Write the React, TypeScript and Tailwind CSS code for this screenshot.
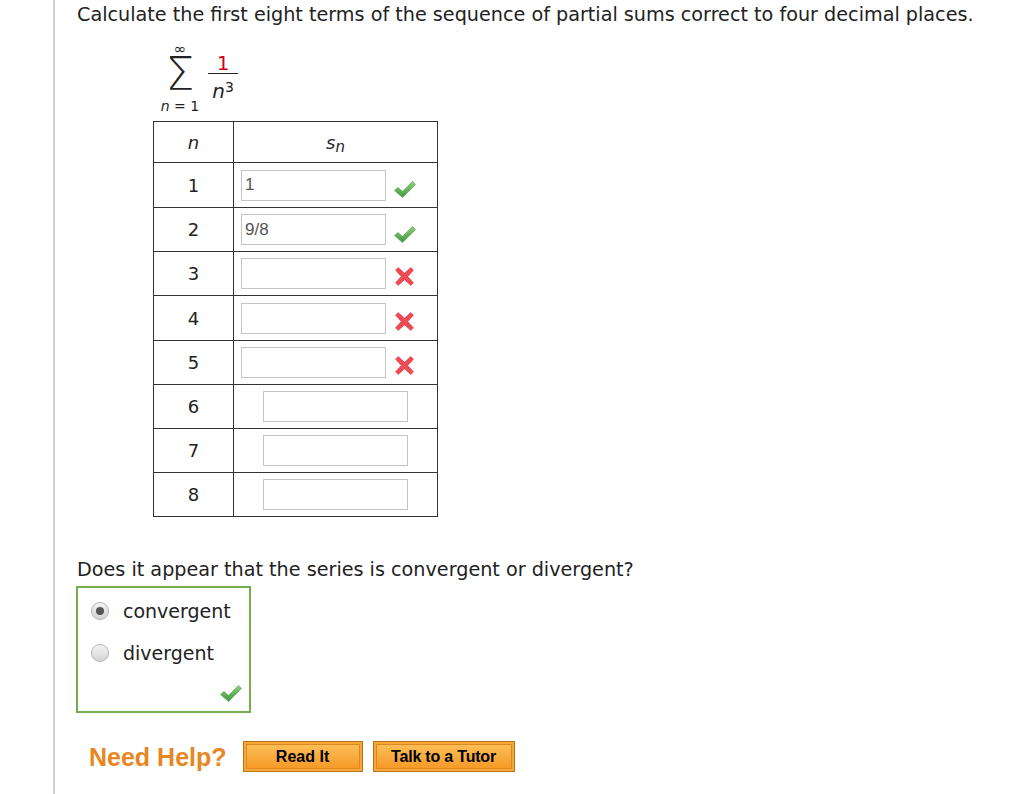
import React from "react";

function Check({ className = "" }: { className?: string }) {
  return (
    <svg viewBox="0 0 24 20" className={className}>
      <defs>
        <linearGradient id="chk" x1="0" y1="0" x2="0" y2="1">
          <stop offset="0" stopColor="#8fd07a" />
          <stop offset="1" stopColor="#3e9a3a" />
        </linearGradient>
      </defs>
      <path
        d="M1.5 10.5 L5 7.5 L9.5 11.5 L19.5 1.5 L22.5 4.5 L9.5 17.5 Z"
        fill="url(#chk)"
        stroke="#4a9a44"
        strokeWidth="0.6"
        strokeLinejoin="round"
      />
    </svg>
  );
}

function Cross({ className = "" }: { className?: string }) {
  return (
    <svg viewBox="0 0 20 20" className={className}>
      <path
        d="M4 1.5 L10 7 L16 1.5 L18.5 4 L13 10 L18.5 16 L16 18.5 L10 13 L4 18.5 L1.5 16 L7 10 L1.5 4 Z"
        fill="#ef4b54"
        stroke="#e2323c"
        strokeWidth="0.6"
        strokeLinejoin="round"
      />
    </svg>
  );
}

const rows: { n: number; value?: string; mark?: "ok" | "bad"; h: string }[] = [
  { n: 1, value: "1", mark: "ok", h: "h-[45px]" },
  { n: 2, value: "9/8", mark: "ok", h: "h-[44px]" },
  { n: 3, value: "", mark: "bad", h: "h-[44px]" },
  { n: 4, value: "", mark: "bad", h: "h-[45px]" },
  { n: 5, value: "", mark: "bad", h: "h-[44px]" },
  { n: 6, h: "h-[44px]" },
  { n: 7, h: "h-[44px]" },
  { n: 8, h: "h-[44px]" },
];

function Field({ value }: { value?: string }) {
  return (
    <div className="h-[31px] w-[145px] border border-[#c4c4c4] bg-white px-[3px] flex items-center font-['Liberation_Sans',sans-serif] text-[17px] text-[#555]">
      {value}
    </div>
  );
}

export default function App() {
  return (
    <div className="min-h-screen bg-white font-['DejaVu_Sans',sans-serif] text-[#222]">
      <div className="ml-[53px] min-h-[794px] border-l-2 border-[#d2d2d2] pl-[22px] pt-[4px]">
        <p className="text-[19.2px] leading-[22px] whitespace-nowrap">
          Calculate the first eight terms of the sequence of partial sums correct to four decimal places.
        </p>

        {/* series */}
        <div className="ml-[80px] mt-[16px] h-[70px] flex items-start">
          <div className="flex flex-col items-center w-[46px]">
            <span className="text-[15px] leading-[15px]">∞</span>
            <span className="-mt-[6px] text-[46px] leading-[46px] font-extralight">Σ</span>
            <span className="mt-[2px] text-[14px] leading-[14px] whitespace-nowrap">
              <i>n</i> = 1
            </span>
          </div>
          <div className="ml-[5px] mt-[11px] flex flex-col items-center">
            <span className="text-[20px] leading-[20px] text-[#d0021b]">1</span>
            <span className="h-px w-[30px] bg-[#222]" />
            <span className="mt-[7px] text-[20px] leading-[20px] whitespace-nowrap">
              <i>n</i>
              <span className="relative -top-[6px] text-[14px]">3</span>
            </span>
          </div>
        </div>

        {/* table */}
        <table className="ml-[76px] mt-[9px] border-collapse border border-[#333] text-[18px]">
          <thead>
            <tr className="h-[41px]">
              <th className="w-[80px] border border-[#333] font-normal italic">n</th>
              <th className="w-[204px] border border-[#333] font-normal italic">
                s<sub className="text-[15px]">n</sub>
              </th>
            </tr>
          </thead>
          <tbody>
            {rows.map((r) => (
              <tr key={r.n} className={r.h}>
                <td className="border border-[#333] text-center">{r.n}</td>
                <td className="border border-[#333]">
                  {r.mark ? (
                    <div className="flex items-center pl-[7px] gap-[7px]">
                      <Field value={r.value} />
                      {r.mark === "ok" ? (
                        <Check className="w-[24px] h-[20px] mt-[10px]" />
                      ) : (
                        <Cross className="w-[21px] h-[21px] mt-[6px] ml-[1px]" />
                      )}
                    </div>
                  ) : (
                    <div className="flex justify-center">
                      <Field />
                    </div>
                  )}
                </td>
              </tr>
            ))}
          </tbody>
        </table>

        <p className="mt-[42px] text-[19.2px] leading-[22px]">
          Does it appear that the series is convergent or divergent?
        </p>

        <div className="-ml-px mt-[5px] w-[175px] h-[127px] border-2 border-[#74ad4c] flex flex-col">
          <label className="mt-[12px] ml-[13px] flex items-center gap-[14px] text-[19px] leading-[22px]">
            <span className="w-[18px] h-[18px] rounded-full border border-[#b5b5b5] bg-gradient-to-b from-[#f4f4f4] to-[#d4d4d4] flex items-center justify-center">
              <span className="w-[8px] h-[8px] rounded-full bg-[#555]" />
            </span>
            convergent
          </label>
          <label className="mt-[20px] ml-[13px] flex items-center gap-[14px] text-[19px] leading-[22px]">
            <span className="w-[18px] h-[18px] rounded-full border border-[#b5b5b5] bg-gradient-to-b from-[#f4f4f4] to-[#d4d4d4]" />
            divergent
          </label>
          <div className="mt-auto mb-[7px] mr-[6px] self-end">
            <Check className="w-[24px] h-[20px]" />
          </div>
        </div>

        <div className="mt-[28px] ml-[12px] flex items-center font-['Liberation_Sans',sans-serif]">
          <span className="text-[25px] font-bold text-[#e8861f] leading-[28px]">Need Help?</span>
          <button className="ml-[16px] h-[31px] w-[120px] border border-[#b8741d] bg-[#f8a636] p-[2px]">
            <span className="flex h-full items-center justify-center border border-[#d98a25] bg-gradient-to-b from-[#fbbe55] to-[#f69a26] text-[16px] font-bold text-black">
              Read It
            </span>
          </button>
          <button className="ml-[10px] h-[31px] w-[142px] border border-[#b8741d] bg-[#f8a636] p-[2px]">
            <span className="flex h-full items-center justify-center border border-[#d98a25] bg-gradient-to-b from-[#fbbe55] to-[#f69a26] text-[16px] font-bold text-black tracking-[-0.2px]">
              Talk to a Tutor
            </span>
          </button>
        </div>
      </div>
    </div>
  );
}
